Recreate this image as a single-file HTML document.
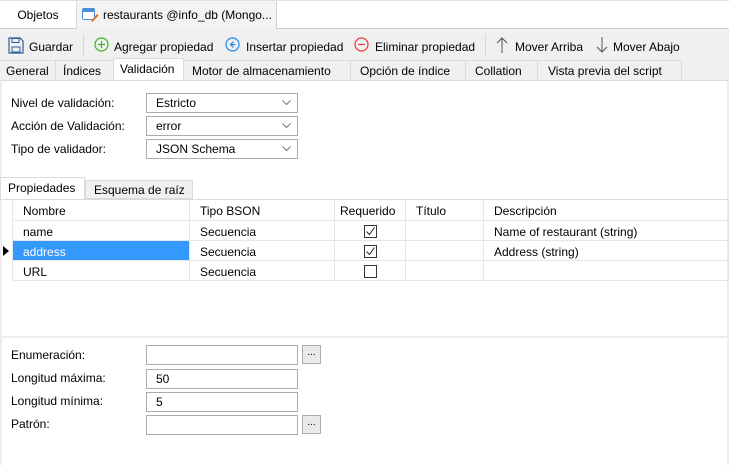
<!DOCTYPE html>
<html><head><meta charset="utf-8"><style>
*{box-sizing:border-box;margin:0;padding:0}
body{width:729px;height:465px;overflow:hidden;background:#fff;font-family:"Liberation Sans",sans-serif;font-size:12px;color:#000;position:relative}
.a{position:absolute;white-space:nowrap}
.box{position:absolute;border:1px solid #acacac;background:#fff}
.cell{position:absolute;border-right:1px solid #e6e6e6;border-bottom:1px solid #e6e6e6;padding-left:10px;line-height:22px;height:20px}
.chk{position:absolute;width:13px;height:13px;border:1px solid #333;background:#fff}
.btn{position:absolute;width:19px;height:19px;border:1px solid #adadad;background:#e9e9e9;font-size:10px;text-align:center;line-height:14px}
.dd{position:absolute;right:6px;top:6px}
</style></head><body>
<div class="a" style="left:0;top:0;width:729px;height:29px;background:#fff;border-top:1px solid #e0e0e0;border-bottom:1px solid #cfcfcf"></div>
<div class="a" style="left:0;top:1px;width:77px;height:27px;border-right:1px solid #dcdcdc;line-height:28px;text-align:center">Objetos</div>
<div class="a" style="left:77px;top:1px;width:200px;height:28px;background:#f3f3f3;border-right:1px solid #d0d0d0;line-height:28px;padding-left:26px">restaurants @info_db (Mongo...</div>
<svg class="a" style="left:82px;top:7px" width="17" height="16"><rect x="0" y="1" width="13" height="12" rx="2" fill="#4a90d9"/><rect x="1" y="5" width="11" height="7" fill="#fff"/><path d="M9 14 L15 7 L16.5 8.5 L10.5 15 Z" fill="#e07020"/></svg>
<div class="a" style="left:0;top:29px;width:729px;height:52px;background:#f0f0f0"></div>
<svg class="a" style="left:8px;top:37px" width="16" height="17"><path d="M1 1h11l3 3v12H1z" fill="none" stroke="#2a5d9a" stroke-width="1.2"/><rect x="4" y="1.5" width="7" height="4" fill="none" stroke="#2a5d9a"/><rect x="4" y="10" width="8" height="5" fill="none" stroke="#2a5d9a"/></svg>
<div class="a" style="left:29px;top:40px">Guardar</div>
<div class="a" style="left:83px;top:34px;width:1px;height:22px;background:#d8d8d8"></div>
<svg class="a" style="left:94px;top:37px" width="15" height="15"><circle cx="7.5" cy="7.5" r="6.5" fill="none" stroke="#3cb521" stroke-width="1.2"/><path d="M7.5 4v7M4 7.5h7" stroke="#3cb521" stroke-width="1.2"/></svg>
<div class="a" style="left:114px;top:40px">Agregar propiedad</div>
<svg class="a" style="left:225px;top:37px" width="15" height="15"><circle cx="7.5" cy="7.5" r="6.5" fill="none" stroke="#1e88e5" stroke-width="1.2"/><path d="M8.5 4.5L5.5 7.5l3 3M5.5 7.5h5" fill="none" stroke="#1e88e5" stroke-width="1.2"/></svg>
<div class="a" style="left:246px;top:40px">Insertar propiedad</div>
<svg class="a" style="left:354px;top:37px" width="15" height="15"><circle cx="7.5" cy="7.5" r="6.5" fill="none" stroke="#e53935" stroke-width="1.2"/><path d="M4 7.5h7" stroke="#e53935" stroke-width="1.2"/></svg>
<div class="a" style="left:375px;top:40px">Eliminar propiedad</div>
<div class="a" style="left:485px;top:34px;width:1px;height:22px;background:#d8d8d8"></div>
<svg class="a" style="left:496px;top:37px" width="12" height="16"><path d="M6 1v15M1 6l5-5 5 5" fill="none" stroke="#555" stroke-width="1"/></svg>
<div class="a" style="left:515px;top:40px">Mover Arriba</div>
<svg class="a" style="left:596px;top:37px" width="12" height="16"><path d="M6 0v15M1 10l5 5 5-5" fill="none" stroke="#555" stroke-width="1"/></svg>
<div class="a" style="left:613px;top:40px">Mover Abajo</div>
<div class="a" style="left:0;top:60px;width:682px;height:20px;border-top:1px solid #dadada;border-right:1px solid #dadada"></div>
<div class="a" style="left:6px;top:64px">General</div>
<div class="a" style="left:55px;top:60px;width:1px;height:20px;background:#dadada"></div>
<div class="a" style="left:63px;top:64px">Índices</div>
<div class="a" style="left:113px;top:58px;width:71px;height:23px;background:#fff;border:1px solid #dadada;border-bottom:none;padding-left:6px;line-height:21px">Validación</div>
<div class="a" style="left:192px;top:64px">Motor de almacenamiento</div>
<div class="a" style="left:350px;top:60px;width:1px;height:20px;background:#dadada"></div>
<div class="a" style="left:360px;top:64px">Opción de índice</div>
<div class="a" style="left:465px;top:60px;width:1px;height:20px;background:#dadada"></div>
<div class="a" style="left:475px;top:64px">Collation</div>
<div class="a" style="left:537px;top:60px;width:1px;height:20px;background:#dadada"></div>
<div class="a" style="left:548px;top:64px">Vista previa del script</div>
<div class="a" style="left:0;top:80px;width:729px;height:385px;border-left:2px solid #eeeeee;border-right:2px solid #eeeeee;border-top:1px solid #dadada"></div>
<div class="a" style="left:11px;top:96px">Nivel de validación:</div>
<div class="a" style="left:11px;top:119px">Acción de Validación:</div>
<div class="a" style="left:11px;top:142px">Tipo de validador:</div>
<div class="box" style="left:146px;top:93px;width:152px;height:20px;padding-left:9px;line-height:18px">Estricto<svg class="dd" width="9" height="6"><path d="M0.5 0.5l4 4 4-4" fill="none" stroke="#777"/></svg></div>
<div class="box" style="left:146px;top:116px;width:152px;height:20px;padding-left:9px;line-height:18px">error<svg class="dd" width="9" height="6"><path d="M0.5 0.5l4 4 4-4" fill="none" stroke="#777"/></svg></div>
<div class="box" style="left:146px;top:139px;width:152px;height:20px;padding-left:9px;line-height:18px">JSON Schema<svg class="dd" width="9" height="6"><path d="M0.5 0.5l4 4 4-4" fill="none" stroke="#777"/></svg></div>
<div class="a" style="left:0;top:177px;width:85px;height:22px;background:#fff;border:1px solid #dadada;border-bottom:none;padding-left:7px;line-height:20px">Propiedades</div>
<div class="a" style="left:85px;top:180px;width:108px;height:19px;background:#f0f0f0;border:1px solid #dadada;padding-left:8px;line-height:18px">Esquema de raíz</div>
<div class="a" style="left:0;top:199px;width:729px;height:1px;background:#dadada"></div>
<div class="a" style="left:12px;top:200px;width:1px;height:82px;background:#e6e6e6"></div>
<div class="cell" style="left:13px;top:200px;width:177px;height:21px">Nombre</div>
<div class="cell" style="left:190px;top:200px;width:145px;height:21px">Tipo BSON</div>
<div class="cell" style="left:335px;top:200px;width:71px;height:21px;padding-left:5px">Requerido</div>
<div class="cell" style="left:406px;top:200px;width:78px;height:21px">Título</div>
<div class="cell" style="left:484px;top:200px;width:245px;height:21px">Descripción</div>
<div class="cell" style="left:13px;top:221px;width:177px">name</div>
<div class="cell" style="left:190px;top:221px;width:145px">Secuencia</div>
<div class="cell" style="left:335px;top:221px;width:71px"></div>
<div class="cell" style="left:406px;top:221px;width:78px"></div>
<div class="cell" style="left:484px;top:221px;width:245px">Name of restaurant (string)</div>
<div class="cell" style="left:13px;top:241px;width:177px;background:#3399ff;color:#fff">address</div>
<div class="cell" style="left:190px;top:241px;width:145px">Secuencia</div>
<div class="cell" style="left:335px;top:241px;width:71px"></div>
<div class="cell" style="left:406px;top:241px;width:78px"></div>
<div class="cell" style="left:484px;top:241px;width:245px">Address (string)</div>
<div class="cell" style="left:13px;top:261px;width:177px">URL</div>
<div class="cell" style="left:190px;top:261px;width:145px">Secuencia</div>
<div class="cell" style="left:335px;top:261px;width:71px"></div>
<div class="cell" style="left:406px;top:261px;width:78px"></div>
<div class="cell" style="left:484px;top:261px;width:245px"></div>
<svg class="a" style="left:3px;top:246px" width="6" height="10"><path d="M0 0L6 5L0 10Z" fill="#000"/></svg>
<div class="chk" style="left:364px;top:225px"><svg width="11" height="11" style="position:absolute;left:0;top:0"><path d="M1.5 5.5l3 3 5-7" fill="none" stroke="#222" stroke-width="1"/></svg></div>
<div class="chk" style="left:364px;top:245px"><svg width="11" height="11" style="position:absolute;left:0;top:0"><path d="M1.5 5.5l3 3 5-7" fill="none" stroke="#222" stroke-width="1"/></svg></div>
<div class="chk" style="left:364px;top:265px"></div>
<div class="a" style="left:0;top:336px;width:729px;height:2px;background:#eeeeee"></div>
<div class="a" style="left:11px;top:348px">Enumeración:</div>
<div class="a" style="left:11px;top:371px">Longitud máxima:</div>
<div class="a" style="left:11px;top:394px">Longitud mínima:</div>
<div class="a" style="left:11px;top:417px">Patrón:</div>
<div class="box" style="left:146px;top:345px;width:152px;height:20px"></div>
<div class="box" style="left:146px;top:369px;width:152px;height:20px;padding-left:9px;line-height:18px">50</div>
<div class="box" style="left:146px;top:392px;width:152px;height:20px;padding-left:9px;line-height:18px">5</div>
<div class="box" style="left:146px;top:415px;width:152px;height:20px"></div>
<div class="btn" style="left:302px;top:345px">...</div>
<div class="btn" style="left:302px;top:415px">...</div>
</body></html>
